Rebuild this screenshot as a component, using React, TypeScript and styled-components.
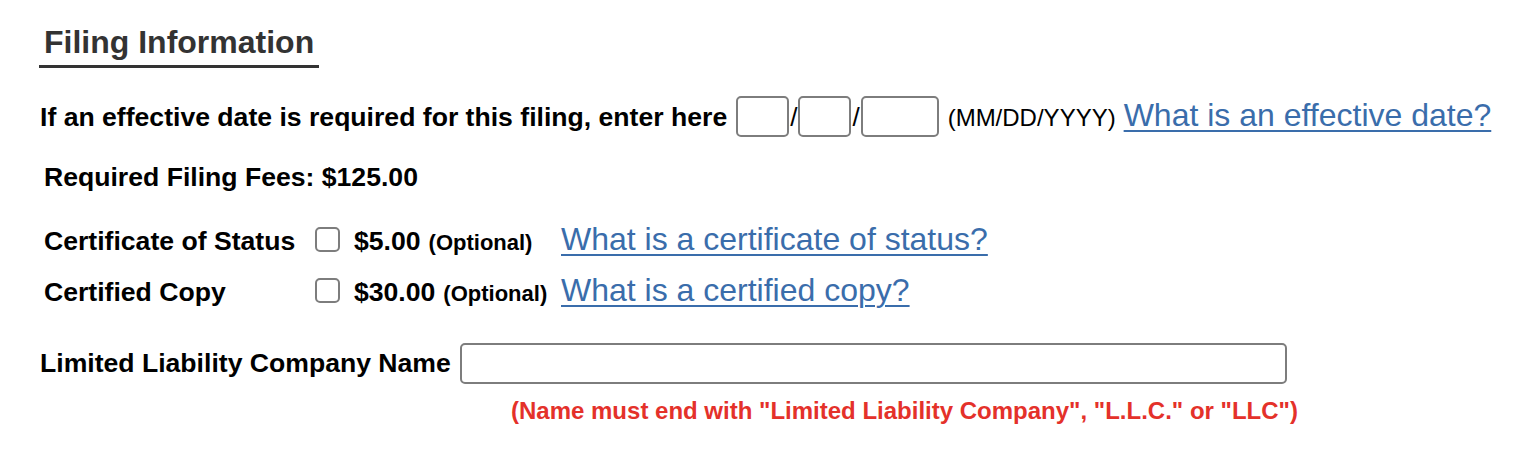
import { Fragment } from "react";
import styled, { createGlobalStyle } from "styled-components";

const GlobalStyle = createGlobalStyle`
  body {
    margin: 0;
    background: #ffffff;
    font-family: "Liberation Sans", Arial, sans-serif;
    color: #000000;
  }
`;

const Page = styled.div`
  padding: 24px 0 0 39px;
`;

const Title = styled.h2`
  display: inline-block;
  margin: 0;
  padding: 0 5px 4px;
  font-size: 32px;
  line-height: 37px;
  font-weight: 700;
  color: #333333;
  border-bottom: 3px solid #333333;
`;

const DateRow = styled.div`
  display: flex;
  align-items: baseline;
  margin-top: 28px;
  padding-left: 1px;
`;

const Label = styled.span`
  font-size: 26.6px;
  font-weight: 700;
`;

const DateInput = styled.input<{ $w: number }>`
  align-self: center;
  box-sizing: border-box;
  width: ${({ $w }) => $w}px;
  height: 41px;
  margin: 0;
  padding: 0 4px;
  border: 2px solid #7d7d7d;
  border-radius: 5px;
  background: #fff;
  font: 24px "Liberation Sans", Arial, sans-serif;
`;

const Slash = styled.span`
  font-size: 26px;
  margin: 0 1px;
`;

const Hint = styled.span`
  font-size: 24px;
  margin: 0 8px 0 9px;
`;

const Link = styled.a`
  font-size: 32px;
  line-height: 37px;
  color: #3a6dab;
  text-decoration: underline;
  text-decoration-thickness: 2px;
  text-underline-offset: 4px;
  cursor: pointer;
`;

const DateLink = styled(Link)`
  line-height: 38px;
`;

const Fees = styled.div`
  margin-top: 25px;
  padding-left: 5px;
  font-size: 26.6px;
  font-weight: 700;
`;

const Options = styled.div`
  display: grid;
  grid-template-columns: 272px 245px auto;
  align-items: baseline;
  row-gap: 14px;
  margin-top: 28px;
  padding-left: 5px;
`;

const Cell = styled.div`
  font-size: 26.6px;
  font-weight: 700;
  white-space: nowrap;
`;

const Check = styled.input`
  appearance: none;
  box-sizing: border-box;
  width: 25px;
  height: 25px;
  margin: 0 14px 0 -1px;
  border: 2px solid #7d7d7d;
  border-radius: 5px;
  background: #fff;
  vertical-align: -1.5px;
`;

const Optional = styled.span`
  font-size: 22px;
  margin-left: 8px;
`;

const NameRow = styled.div`
  display: flex;
  align-items: center;
  margin-top: 34px;
  padding-left: 1px;
`;

const NameInput = styled.input`
  box-sizing: border-box;
  width: 827px;
  height: 41px;
  margin: 0 0 0 9px;
  padding: 0 6px;
  border: 2px solid #7d7d7d;
  border-radius: 5px;
  background: #fff;
  font: 24px "Liberation Sans", Arial, sans-serif;
`;

const Warning = styled.div`
  margin: 13px 0 0 472px;
  font-size: 24px;
  font-weight: 700;
  color: #e4312a;
`;

const options = [
  { label: "Certificate of Status", price: "$5.00", link: "What is a certificate of status?" },
  { label: "Certified Copy", price: "$30.00", link: "What is a certified copy?" },
];

export default function App() {
  return (
    <>
      <GlobalStyle />
      <Page>
        <Title>Filing Information</Title>
        <DateRow>
          <Label>If an effective date is required for this filing, enter here</Label>
          <DateInput $w={53} style={{ marginLeft: 9 }} />
          <Slash>/</Slash>
          <DateInput $w={53} />
          <Slash>/</Slash>
          <DateInput $w={78} />
          <Hint>(MM/DD/YYYY)</Hint>
          <DateLink>What is an effective date?</DateLink>
        </DateRow>
        <Fees>Required Filing Fees: $125.00</Fees>
        <Options>
          {options.map((o) => (
            <Fragment key={o.label}>
              <Cell>{o.label}</Cell>
              <Cell>
                <Check type="checkbox" />
                {o.price}
                <Optional>(Optional)</Optional>
              </Cell>
              <div>
                <Link>{o.link}</Link>
              </div>
            </Fragment>
          ))}
        </Options>
        <NameRow>
          <Label>Limited Liability Company Name</Label>
          <NameInput type="text" />
        </NameRow>
        <Warning>(Name must end with "Limited Liability Company", "L.L.C." or "LLC")</Warning>
      </Page>
    </>
  );
}
